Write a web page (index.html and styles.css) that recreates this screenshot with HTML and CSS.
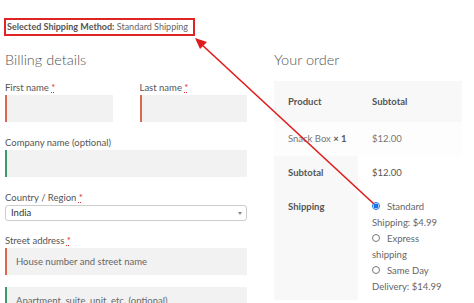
FILE: index.html
```html
<!DOCTYPE html>
<html>
<head>
    <title>Checkout</title>
    <link rel="stylesheet" href="styles.css">
</head>
<body>
    <div class="notice"><b>Selected Shipping Method:</b> Standard Shipping</div>

    <div class="checkout">
        <div class="billing">
            <h3>Billing details</h3>
            <div class="row-two">
                <div class="field">
                    <label>First name <abbr>*</abbr></label>
                    <div class="input invalid"></div>
                </div>
                <div class="field">
                    <label>Last name <abbr>*</abbr></label>
                    <div class="input invalid"></div>
                </div>
            </div>
            <div class="field">
                <label>Company name (optional)</label>
                <div class="input valid"></div>
            </div>
            <div class="field country">
                <label>Country / Region <abbr>*</abbr></label>
                <div class="select">India <span class="caret"></span></div>
            </div>
            <div class="field street">
                <label>Street address <abbr>*</abbr></label>
                <div class="input invalid">House number and street name</div>
            </div>
            <div class="field">
                <div class="input valid">Apartment, suite, unit, etc. (optional)</div>
            </div>
        </div>

        <div class="order">
            <h3>Your order</h3>
            <table class="order-table">
                <colgroup>
                    <col class="col-label">
                    <col>
                </colgroup>
                <tr class="head">
                    <th>Product</th>
                    <th>Subtotal</th>
                </tr>
                <tr class="item">
                    <td>Snack Box <strong>× 1</strong></td>
                    <td>$12.00</td>
                </tr>
                <tr class="foot subtotal">
                    <th>Subtotal</th>
                    <td>$12.00</td>
                </tr>
                <tr class="foot shipping">
                    <th>Shipping</th>
                    <td>
                        <ul class="methods">
                            <li><span class="radio checked"></span>Standard Shipping: $4.99</li>
                            <li><span class="radio"></span>Express shipping</li>
                            <li><span class="radio"></span>Same Day Delivery: $14.99</li>
                        </ul>
                    </td>
                </tr>
            </table>
        </div>
    </div>

    <svg class="arrow" width="474" height="303" viewBox="0 0 474 303">
        <line x1="200" y1="43" x2="374" y2="204" stroke="#e01b1b" stroke-width="1.6"/>
        <polygon points="195,38 207,42 200,49" fill="#e01b1b"/>
    </svg>
</body>
</html>
```

FILE: styles.css
```css
body {
    margin: 0;
    font-family: Lato, "Liberation Sans", sans-serif;
    color: #555;
    font-size: 9.5px;
    position: relative;
    height: 303px;
    overflow: hidden;
}
.notice {
    display: inline-block;
    margin: 18px 0 0 4px;
    padding: 0 5px 0 1px;
    height: 14px;
    line-height: 14px;
    border: 2px solid #e02424;
    font-size: 9px;
    color: #666;
}
.notice b {
    color: #555;
}
.checkout {
    display: flex;
    gap: 27px;
    padding-left: 5px;
}
h3 {
    font-weight: 300;
    font-size: 14.5px;
    line-height: 18px;
    color: #555;
    margin: 15px 0 12px;
}
.billing {
    width: 242px;
}
.row-two {
    display: flex;
    gap: 27px;
}
.row-two .field {
    flex: 1;
}
.field {
    margin-bottom: 14px;
}
.field.country {
    margin-bottom: 13px;
}
.field.street {
    margin-bottom: 12px;
}
label {
    display: block;
    line-height: 13px;
    margin-bottom: 1px;
}
abbr {
    color: #d33;
    text-decoration: underline dotted;
}
.input {
    height: 27px;
    background: #f2f2f2;
    border-left: 2px solid;
    padding-left: 9px;
    line-height: 27px;
    color: #666;
    box-sizing: border-box;
}
.invalid {
    border-left-color: #d9694f;
}
.valid {
    border-left-color: #3c9a6c;
}
.select {
    height: 16px;
    border: 1px solid #ccc;
    border-radius: 3px;
    box-sizing: border-box;
    padding-left: 5px;
    line-height: 14px;
    color: #333;
    position: relative;
}
.caret {
    position: absolute;
    right: 4px;
    top: 6px;
    border-left: 2.5px solid transparent;
    border-right: 2.5px solid transparent;
    border-top: 3px solid #888;
}
.order {
    width: 188px;
}
.order-table {
    width: 188px;
    table-layout: fixed;
    border-collapse: collapse;
}
.col-label {
    width: 84px;
}
.order-table th,
.order-table td {
    text-align: left;
    vertical-align: top;
    padding: 0 14px;
    line-height: 16px;
}
.order-table tr > :first-child {
    padding-right: 0;
    white-space: nowrap;
}
.order-table th {
    font-weight: 700;
    color: #555;
}
.head {
    background: #f8f8f8;
}
.head th {
    height: 41px;
    vertical-align: middle;
}
.item td {
    height: 34px;
    vertical-align: middle;
    background: #fdfdfd;
    color: #777;
}
.item strong {
    color: #555;
}
.foot th {
    background: #f8f8f8;
}
.subtotal th,
.subtotal td {
    padding-top: 9px;
    height: 25px;
}
.shipping th,
.shipping td {
    padding-top: 9px;
    height: 101px;
}
.methods {
    list-style: none;
    margin: 0;
    padding: 0;
    color: #666;
}
.radio {
    display: inline-block;
    width: 6px;
    height: 6px;
    border: 1px solid #777;
    border-radius: 50%;
    margin-right: 7px;
    vertical-align: 0;
}
.radio.checked {
    border-color: #1a73e8;
    background: radial-gradient(circle, #1a73e8 55%, #fff 62%);
}
.arrow {
    position: absolute;
    left: 0;
    top: 0;
    pointer-events: none;
}
```
